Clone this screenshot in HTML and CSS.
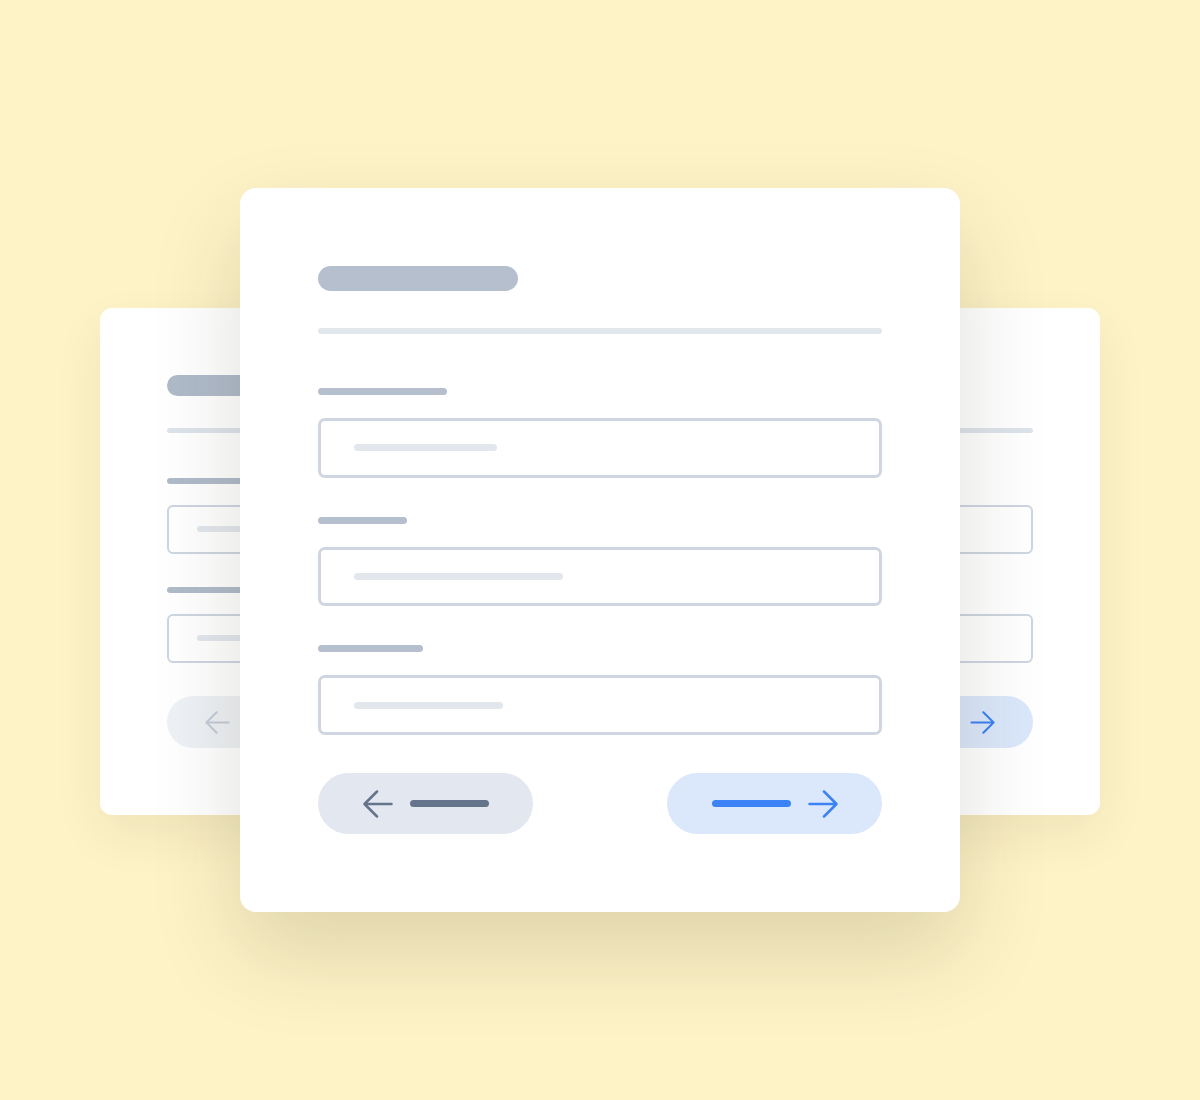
FILE: index.html
```html
<!DOCTYPE html>
<html lang="en">
<head>
    <meta charset="UTF-8">
    <meta name="viewport" content="width=device-width, initial-scale=1.0">
    <title>Multi-step form</title>
    <link rel="stylesheet" href="styles.css">
</head>
<body>
    <div class="stage">
        <!-- previous step (behind, left) -->
        <div class="card back-card left">
            <div class="title-bar"></div>
            <div class="rule"></div>
            <div class="label" style="width: 150px"></div>
            <div class="field"><span class="hint" style="width: 120px"></span></div>
            <div class="label" style="width: 120px"></div>
            <div class="field"><span class="hint" style="width: 150px"></span></div>
            <div class="actions">
                <div class="btn btn-back faded">
                    <svg class="arrow" viewBox="0 0 30 28"><path d="M28.5 14H1.5M14 1.5 1.5 14 14 26.5"/></svg>
                    <span class="bar"></span>
                </div>
                <div class="btn btn-next">
                    <span class="bar"></span>
                    <svg class="arrow" viewBox="0 0 30 28"><path d="M1.5 14h27M16 1.5 28.5 14 16 26.5"/></svg>
                </div>
            </div>
        </div>

        <!-- next step (behind, right) -->
        <div class="card back-card right">
            <div class="title-bar"></div>
            <div class="rule"></div>
            <div class="label" style="width: 130px"></div>
            <div class="field"><span class="hint" style="width: 140px"></span></div>
            <div class="label" style="width: 100px"></div>
            <div class="field"><span class="hint" style="width: 170px"></span></div>
            <div class="actions">
                <div class="btn btn-back">
                    <svg class="arrow" viewBox="0 0 30 28"><path d="M28.5 14H1.5M14 1.5 1.5 14 14 26.5"/></svg>
                    <span class="bar"></span>
                </div>
                <div class="btn btn-next">
                    <span class="bar"></span>
                    <svg class="arrow" viewBox="0 0 30 28"><path d="M1.5 14h27M16 1.5 28.5 14 16 26.5"/></svg>
                </div>
            </div>
        </div>

        <!-- current step -->
        <div class="card main-card">
            <div class="title-bar"></div>
            <div class="rule"></div>

            <div class="label" style="width: 129px"></div>
            <div class="field"><span class="hint" style="width: 143px"></span></div>

            <div class="label" style="width: 89px"></div>
            <div class="field"><span class="hint" style="width: 209px"></span></div>

            <div class="label" style="width: 105px"></div>
            <div class="field"><span class="hint" style="width: 149px"></span></div>

            <div class="actions">
                <div class="btn btn-back">
                    <svg class="arrow" viewBox="0 0 30 28"><path d="M28.5 14H1.5M14 1.5 1.5 14 14 26.5"/></svg>
                    <span class="bar"></span>
                </div>
                <div class="btn btn-next">
                    <span class="bar"></span>
                    <svg class="arrow" viewBox="0 0 30 28"><path d="M1.5 14h27M16 1.5 28.5 14 16 26.5"/></svg>
                </div>
            </div>
        </div>
    </div>
</body>
</html>
```

FILE: styles.css
```css
body {
    margin: 0;
    padding: 0;
    min-height: 100vh;
    background: #fef3c7;
    font-family: "Liberation Sans", Arial, sans-serif;
    display: flex;
    align-items: center;
    justify-content: center;
}

.stage {
    display: grid;
    width: 1000px;
    height: 724px;
}

.card {
    grid-area: 1 / 1;
    background: #ffffff;
    display: flex;
    flex-direction: column;
    box-sizing: border-box;
}

/* ---- front card ---- */
.main-card {
    justify-self: center;
    width: 720px;
    height: 724px;
    padding: 78px;
    border-radius: 16px;
    box-shadow: 0 40px 90px rgba(40, 35, 10, 0.15);
}

.main-card .title-bar {
    width: 200px;
    height: 25px;
    border-radius: 13px;
    background: #b5bfce;
}

.main-card .rule {
    margin-top: 37px;
    height: 6px;
    border-radius: 3px;
    background: #e2e7ee;
}

.main-card .label {
    margin-top: 54px;
    height: 7px;
    border-radius: 4px;
    background: #b5bfce;
}

.main-card .field + .label {
    margin-top: 39px;
}

.main-card .field {
    margin-top: 23px;
    height: 60px;
    border: 3px solid #cfd6e1;
    border-radius: 7px;
    padding: 0 33px;
}

.main-card .hint {
    height: 7px;
    border-radius: 4px;
}

.main-card .actions {
    margin-top: 38px;
}

.main-card .btn {
    width: 215px;
    height: 61px;
    border-radius: 31px;
    gap: 17px;
}

.main-card .bar {
    width: 79px;
    height: 7px;
    border-radius: 4px;
}

.main-card .arrow {
    width: 30px;
    height: 28px;
}

/* ---- cards behind ---- */
.back-card {
    align-self: start;
    margin-top: 120px;
    width: 612px;
    height: 507px;
    padding: 67px;
    border-radius: 12px;
    box-shadow: 0 20px 50px rgba(40, 35, 10, 0.07);
}

.back-card.left {
    justify-self: start;
}

.back-card.right {
    justify-self: end;
}

.back-card .title-bar {
    width: 170px;
    height: 21px;
    border-radius: 11px;
    background: #b0bbca;
}

.back-card .rule {
    margin-top: 32px;
    height: 5px;
    border-radius: 3px;
    background: #dde3eb;
}

.back-card .label {
    margin-top: 45px;
    height: 6px;
    border-radius: 3px;
    background: #b0bbca;
}

.back-card .field + .label {
    margin-top: 33px;
}

.back-card .field {
    margin-top: 21px;
    height: 50px;
    border: 2.5px solid #cdd5e0;
    border-radius: 6px;
    padding: 0 28px;
}

.back-card .hint {
    height: 6px;
    border-radius: 3px;
}

.back-card .actions {
    margin-top: 33px;
}

.back-card .btn {
    width: 182px;
    height: 52px;
    border-radius: 26px;
    gap: 15px;
}

.back-card .bar {
    width: 66px;
    height: 6px;
    border-radius: 3px;
}

.back-card .arrow {
    width: 25px;
    height: 23px;
}

/* ---- shared pieces ---- */
.field {
    display: flex;
    align-items: center;
    box-sizing: border-box;
}

.hint {
    display: block;
    background: #e2e7ee;
}

.actions {
    display: flex;
    justify-content: space-between;
}

.btn {
    display: flex;
    align-items: center;
    justify-content: center;
}

.bar {
    display: block;
}

.arrow {
    flex: none;
    fill: none;
    stroke-width: 2.5;
    stroke-linecap: round;
    stroke-linejoin: round;
}

.btn-back {
    background: #e2e7f0;
}

.btn-back .bar {
    background: #64748b;
}

.btn-back .arrow {
    stroke: #64748b;
}

.btn-next {
    background: #dbe8fb;
}

.btn-next .bar {
    background: #3b82f6;
}

.btn-next .arrow {
    stroke: #3b82f6;
}

.btn-back.faded {
    background: #eef1f5;
}

.btn-back.faded .arrow {
    stroke: #c3ccd8;
}

.btn-back.faded .bar {
    background: #c3ccd8;
}
```
